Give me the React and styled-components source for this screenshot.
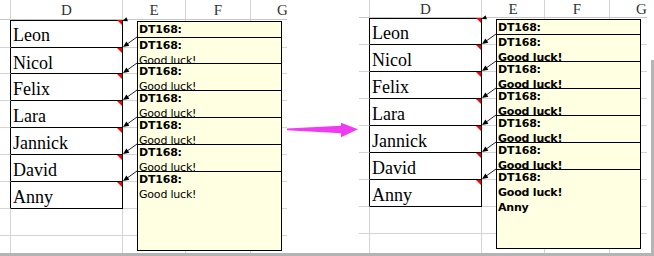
import React from "react";
import styled, { createGlobalStyle } from "styled-components";

const GlobalStyle = createGlobalStyle`
  html, body { margin: 0; padding: 0; background: #fff; }
  body { width: 654px; height: 256px; overflow: hidden; }
`;

const colWidths = [11, 112, 63, 65, 64];
const heads = ["", "D", "E", "F", "G"];
const names = ["Leon", "Nicol", "Felix", "Lara", "Jannick", "David", "Anny"];

const Page = styled.div`
  position: relative;
  width: 654px;
  height: 253px;
  display: flex;
  align-items: flex-start;
  border-bottom: 3px solid #b4b4b4;
  &::after {
    content: "";
    position: absolute;
    right: 0;
    top: 60px;
    bottom: 0;
    width: 3px;
    background: #b4b4b4;
  }
`;

const Sheet = styled.div`
  position: relative;
  flex: none;
  width: ${(p) => p.$w}px;
  height: 253px;
  overflow: hidden;
`;

const HeaderRow = styled.div`
  display: flex;
  height: ${(p) => p.$h + 1}px;
  box-sizing: border-box;
  border-bottom: 1px solid #c6c6c6;
`;

const HeadCell = styled.div`
  flex: none;
  box-sizing: border-box;
  width: ${(p) => p.$w}px;
  border-right: 1px solid #d4d4d4;
  padding-top: 2px;
  text-align: center;
  font: 15px "Liberation Serif", serif;
  line-height: ${(p) => p.$h - 2}px;
  color: #333;
`;

const Row = styled.div`
  display: flex;
  height: ${(p) => p.$h}px;
`;

const Cell = styled.div`
  flex: none;
  box-sizing: border-box;
  width: ${(p) => p.$w}px;
  border-right: 1px solid ${(p) => (p.$edge ? "#000" : "#d4d4d4")};
  border-bottom: 1px solid #d4d4d4;
`;

const NameCell = styled(Cell)`
  position: relative;
  border-right-color: #000;
  border-bottom-color: #000;
  box-shadow: ${(p) => (p.$first ? "inset 0 1px 0 #000" : "none")};
  padding: 5px 0 0 2px;
  font: 18px "Liberation Serif", serif;
  line-height: 20px;
  color: #000;
  &::after {
    content: "";
    position: absolute;
    top: 0;
    right: 0;
    border-top: 5px solid #ff0000;
    border-left: 5px solid transparent;
  }
`;

const NoteStack = styled.div`
  position: absolute;
  left: 137px;
  top: ${(p) => p.$top}px;
  width: 145px;
  display: flex;
  flex-direction: column;
`;

const Note = styled.div`
  box-sizing: border-box;
  height: ${(p) => p.$h}px;
  overflow: hidden;
  background: #ffffe1;
  border: 1px solid #000;
  border-bottom: ${(p) => (p.$last ? "1px solid #000" : "none")};
  padding: 0 0 0 1px;
  font: ${(p) => (p.$bold ? 700 : 400)} 11px "DejaVu Sans", sans-serif;
  letter-spacing: -0.2px;
  line-height: 15px;
  color: #000;
  white-space: nowrap;
`;

const Strong = styled.div`
  font-weight: 700;
`;

const Overlay = styled.svg`
  position: absolute;
  left: 0;
  top: 0;
  pointer-events: none;
`;

const Gap = styled.div`
  flex: none;
  width: 72px;
  height: 253px;
  box-sizing: border-box;
  padding-top: 6px;
  display: flex;
  align-items: center;
`;

function head(tx, ty, sx, sy, len = 6, half = 2.6) {
  const dx = tx - sx;
  const dy = ty - sy;
  const d = Math.hypot(dx, dy);
  const ux = dx / d;
  const uy = dy / d;
  const bx = tx - ux * len;
  const by = ty - uy * len;
  const nx = -uy;
  const ny = ux;
  return `${tx},${ty} ${bx + nx * half},${by + ny * half} ${bx - nx * half},${by - ny * half}`;
}

function Spreadsheet({ width, headerH, rowHeights, noteTop, bold }) {
  const bodyTop = headerH + 1;
  const lines = [];
  let y = bodyTop;
  rowHeights.forEach((h) => {
    y += h;
    lines.push(y - 1);
  });
  const noteHeights = [
    lines[0] - 10 - noteTop,
    ...rowHeights.slice(1, 6),
    80,
  ];
  const arrows = lines.slice(0, 6).map((L) => ({ sx: 137, sy: L - 10, tx: 123, ty: L }));

  return (
    <Sheet $w={width}>
      <HeaderRow $h={headerH}>
        {heads.map((t, i) => (
          <HeadCell key={i} $w={colWidths[i]} $h={headerH}>
            {t}
          </HeadCell>
        ))}
      </HeaderRow>
      {rowHeights.map((h, r) => (
        <Row key={r} $h={h}>
          <Cell $w={colWidths[0]} $edge={r < names.length} />
          {r < names.length ? (
            <NameCell $w={colWidths[1]} $first={r === 0}>
              {names[r]}
            </NameCell>
          ) : (
            <Cell $w={colWidths[1]} />
          )}
          <Cell $w={colWidths[2]} />
          <Cell $w={colWidths[3]} />
          <Cell $w={colWidths[4]} />
        </Row>
      ))}

      <NoteStack $top={noteTop}>
        {noteHeights.map((h, i) => (
          <Note key={i} $h={h} $last={i === noteHeights.length - 1} $bold={bold}>
            <Strong>DT168:</Strong>
            {i > 0 && <div>Good luck!</div>}
            {bold && i === noteHeights.length - 1 && <div>Anny</div>}
          </Note>
        ))}
      </NoteStack>

      <Overlay width={width} height={253}>
        <polygon points={head(122.5, noteTop, 128, noteTop - 2, 5, 2.2)} fill="#000" />
        {arrows.map((a, i) => (
          <g key={i}>
            <line x1={a.sx} y1={a.sy} x2={a.tx + 2} y2={a.ty - 1.4} stroke="#222" strokeWidth="1" />
            <polygon points={head(a.tx, a.ty, a.sx, a.sy)} fill="#000" />
          </g>
        ))}
      </Overlay>
    </Sheet>
  );
}

export default function App() {
  return (
    <>
      <GlobalStyle />
      <Page>
        <Spreadsheet
          width={287}
          headerH={19}
          rowHeights={[28, 26, 27, 27, 27, 27, 27, 27, 27]}
          noteTop={21}
        />
        <Gap>
          <svg width="72" height="20" viewBox="0 0 72 20">
            <polygon
              points="0,8.4 54,5.8 54,2.8 71,9.3 54,17.3 54,13.3 0,10.2"
              fill="#f03cf0"
            />
          </svg>
        </Gap>
        <Spreadsheet
          width={288}
          headerH={17}
          rowHeights={[27, 27, 27, 27, 27, 27, 27, 27, 27]}
          noteTop={19}
          bold
        />
      </Page>
    </>
  );
}
